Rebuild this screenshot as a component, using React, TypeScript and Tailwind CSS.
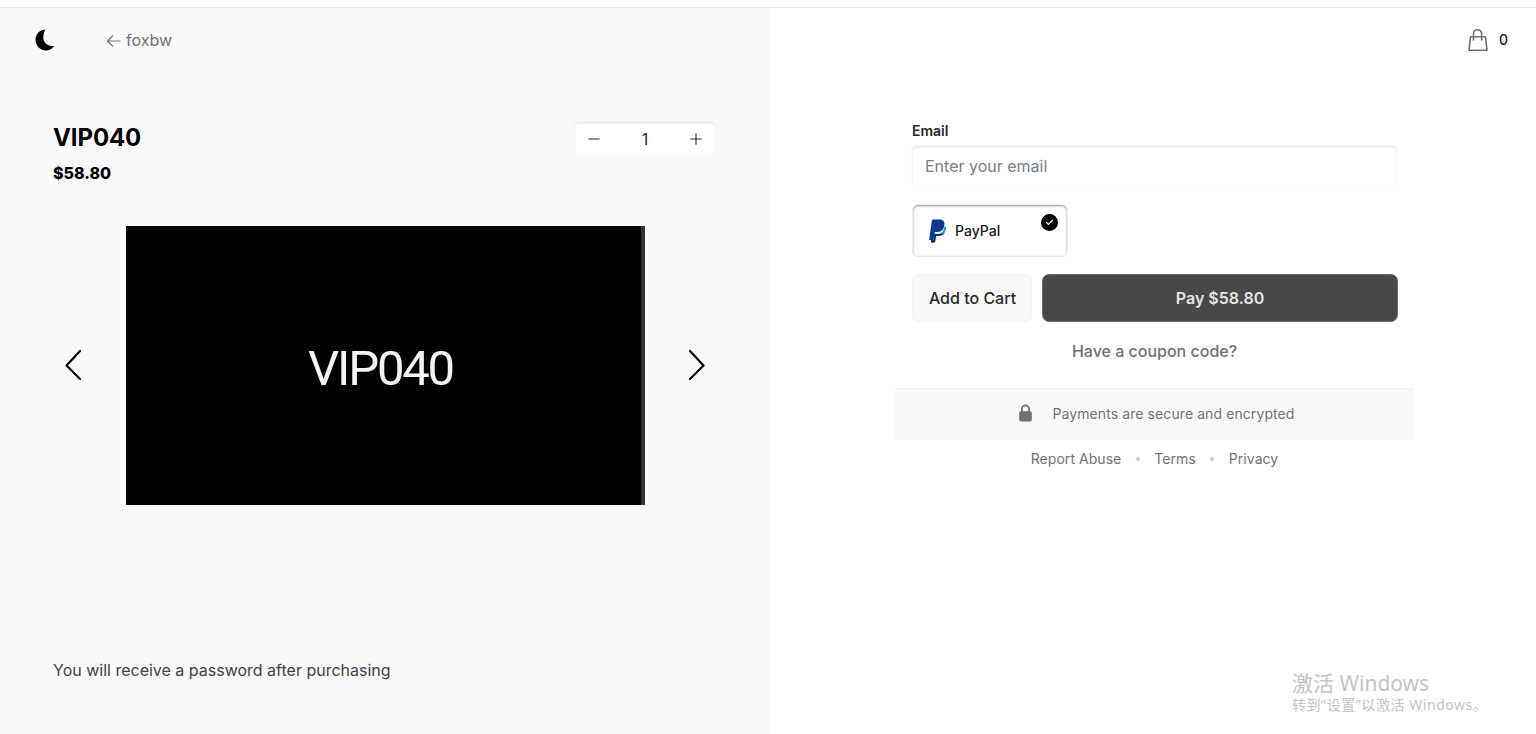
import React from "react";
import { Minus, Plus, Check } from "lucide-react";

const PayPalLogo = () => (
  <svg viewBox="0 0 24 24" className="h-[24px] w-[22px]" preserveAspectRatio="none">
    <path
      fill="#169bd7"
      d="M20.1 7.2c.1 3.6-3 7.6-7.6 7.6h-2l-1.2 7.2H5.6l-.2 1.2h4.4l1.1-6.6h3c4.6 0 7.4-3 8-6.6.3-1.700-.5-2.600-1.800-2.800z"
    />
    <path
      fill="#0d3a8c"
      d="M7.600 .5h7.300c3.300 0 5.500 1.700 5.200 5-.4 4.700-3.300 7.500-7.500 7.500H10.300c-.6 0-.9.3-1 .9L8.200 21H3.400L6.400 1.500C6.500.8 6.900.5 7.600.5z"
    />
    <path
      fill="#0a2a6c"
      d="M9.300 13.900 8.200 21H5.600l-.2 2.500h4.400l1.100-6.600h3c2.800 0 5-1.100 6.400-2.900-1.400.8-3.200 1-5.800 1h-3c-.9 0-1.500 0-1.900-1.100z"
    />
  </svg>
);

const Moon = () => (
  <svg viewBox="0 0 20 22" className="h-[22px] w-[20px]">
    <path fill="#000" d="M10.500.6C5 .6.500 5 .500 10.800S5 21.400 10.800 21.400c3.600 0 6.700-1.800 8.500-4.500-6 1.100-11-2.700-11-8.300 0-3.300 1-6 2.200-8z" />
  </svg>
);

const Lock = () => (
  <svg viewBox="0 0 16 20" className="h-[18px] w-[15px]">
    <path fill="none" stroke="#71717a" strokeWidth="2" d="M4 9V5.500a4 4 0 0 1 8 0V9" />
    <rect x="1" y="8" width="14" height="11.500" rx="2" fill="#71717a" />
  </svg>
);

const Bag = () => (
  <svg viewBox="0 0 20 22" className="h-[22px] w-[20px]" fill="none" stroke="#71717a" strokeWidth="1.600" strokeLinejoin="round" strokeLinecap="round">
    <path d="M2.500 7.700h15l1.500 13.500H1z" />
    <path d="M5.500 11V4.800a4.100 4.100 0 0 1 8.200 0V11" />
  </svg>
);

const BackArrow = () => (
  <svg viewBox="0 0 15 12" className="mt-[2px] h-[12px] w-[15px]" fill="none" stroke="#71717a" strokeWidth="1.200" strokeLinecap="round" strokeLinejoin="round">
    <path d="M14 6H1.500M6.500 1 1.500 6l5 5" />
  </svg>
);

const Arrow = ({ d }: { d: string }) => (
  <svg viewBox="0 0 20 32" className="mb-[2px] h-[32px] w-[20px]" fill="none" stroke="#000" strokeWidth="2.200" strokeLinecap="round" strokeLinejoin="round">
    <path d={d} />
  </svg>
);

const Dot = () => <span className="h-[4px] w-[4px] rotate-45 bg-[#d4d4d8]" />;

export default function App() {
  return (
    <div className="relative flex h-[734px] flex-col overflow-hidden bg-white font-['Inter',sans-serif]">
      <div className="h-[8px] shrink-0 border-b border-[#ececef]" />
      <div className="flex flex-1">
        {/* product side */}
        <div className="flex w-[770px] shrink-0 flex-col bg-[#fafafb]">
          <div className="flex h-[64px] items-center pl-[35px] pb-[1px]">
            <Moon />
            <a className="ml-[51px] flex items-center gap-[5px] text-[16px] text-[#71717a]">
              <BackArrow />
              foxbw
            </a>
          </div>

          <div className="mt-[50px] flex items-start justify-between pl-[53px] pr-[54px]">
            <div>
              <h1 className="text-[24px] leading-[32px] font-bold tracking-[-0.1px] text-black">VIP040</h1>
              <p className="mt-[7px] text-[16px] leading-[24px] font-extrabold text-black">$58.80</p>
            </div>
            <div className="flex h-[34px] w-[142px] items-center justify-between rounded-[5px] bg-white px-[11px] text-[#27272a] shadow-[inset_0_1px_2px_#e4e4e7]">
              <Minus size={18} strokeWidth={1.5} />
              <span className="text-[16px]">1</span>
              <Plus size={18} strokeWidth={1.5} />
            </div>
          </div>

          <div className="mt-[41px] flex items-center pl-[63px]">
            <Arrow d="M17 2 3.500 16.500 17 30" />
            <div className="ml-[43px] flex h-[279px] w-[519px] items-center justify-center border-r-[4px] border-[#333] bg-black">
              <span className="mt-[7px] mr-[6px] font-['Roboto',sans-serif] text-[49px] font-normal tracking-[-2.200px] text-[#f4f4f4]">
                VIP040
              </span>
            </div>
            <div className="ml-[42px]">
              <Arrow d="M3 2l13.500 14.500L3 30" />
            </div>
          </div>

          <p className="mt-[153px] pl-[53px] text-[16px] leading-[24px] text-[#3f3f46]">
            You will receive a password after purchasing
          </p>
        </div>

        {/* checkout side */}
        <div className="flex flex-1 flex-col">
          <div className="flex h-[64px] items-center justify-end gap-[11px] pr-[28px]">
            <Bag />
            <span className="mb-[1px] text-[14px] font-medium text-[#18181b]">0</span>
          </div>

          <div className="ml-[125px] flex w-[519px] flex-col">
            <div className="px-[17px]">
              <label className="mt-[49px] block text-[14px] leading-[20px] font-semibold text-[#27272a]">Email</label>
              <input
                className="mt-[5px] h-[40px] w-[485px] rounded-[5px] bg-white px-[13px] text-[16px] shadow-[0_0_1px_#ececee,inset_0_1px_2px_#e4e4e7] outline-none placeholder:text-[#7c7c84]"
                placeholder="Enter your email"
              />
              <div className="relative mt-[18px] flex h-[53px] w-[156px] items-center gap-[7px] rounded-[6px] border border-[#ececee] bg-white pl-[13px] shadow-[inset_0_1px_2px_#8e8e96]">
                <PayPalLogo />
                <span className="text-[14px] font-medium text-[#18181b]">PayPal</span>
                <span className="absolute top-[9px] right-[9px] flex h-[17px] w-[17px] items-center justify-center rounded-full bg-black">
                  <Check size={9} strokeWidth={3} className="text-white" />
                </span>
              </div>
              <div className="mt-[17px] flex w-[486px] gap-[10px]">
                <button className="h-[48px] w-[120px] rounded-[7px] bg-[#fafafa] pl-[1px] text-[16px] font-medium text-[#27272a] shadow-[inset_0_0_0_1px_#f4f4f5]">
                  Add to Cart
                </button>
                <button className="h-[48px] w-[356px] rounded-[7px] border border-[#71717a] bg-[#484848] text-[16px] font-semibold text-[#e4e4e7]">
                  Pay $58.80
                </button>
              </div>
              <p className="mt-[17px] w-[485px] text-center text-[16px] leading-[24px] font-medium text-[#71717a]">
                Have a coupon code?
              </p>
            </div>

            <div className="mt-[25px] flex h-[52px] items-center justify-center gap-[19px] rounded-[3px] bg-[#fafafa] pb-[2px] pl-[4px] shadow-[inset_0_1px_1px_#f0f0f2]">
              <Lock />
              <span className="text-[14px] tracking-[0.09px] text-[#71717a]">Payments are secure and encrypted</span>
            </div>

            <div className="mt-[9px] flex items-center justify-center gap-[14.500px] text-[14px] leading-[20px] tracking-[0.05px] text-[#71717a]">
              <a>Report Abuse</a>
              <Dot />
              <a>Terms</a>
              <Dot />
              <a>Privacy</a>
            </div>
          </div>
        </div>
      </div>

      {/* system watermark, sits over the page */}
      <div className="pointer-events-none absolute top-[669px] left-[1292px] font-['Noto_Sans','Noto_Sans_CJK_SC',sans-serif] text-[#c4c4c4]">
        <p className="text-[21px] leading-[28px]">激活 Windows</p>
        <p className="text-[14px] leading-[16px] tracking-[0.55px]">转到“设置”以激活 Windows。</p>
      </div>
    </div>
  );
}
